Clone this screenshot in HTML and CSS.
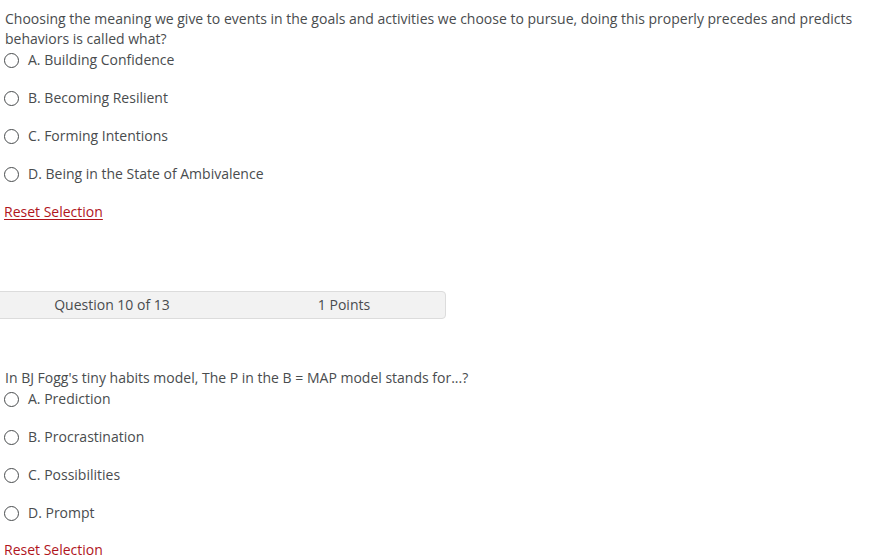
FILE: index.html
```html
<!DOCTYPE html>
<html>
<head>
<meta charset="utf-8">
<link rel="stylesheet" href="styles.css">
</head>
<body>
<div class="quiz">
  <section class="question q-first">
    <p class="prompt">Choosing the meaning we give to events in the goals and activities we choose to pursue, doing this properly precedes and predicts behaviors is called what?</p>
    <ul class="options">
      <li class="option"><span class="radio"></span><span class="label">A. Building Confidence</span></li>
      <li class="option"><span class="radio"></span><span class="label">B. Becoming Resilient</span></li>
      <li class="option"><span class="radio"></span><span class="label">C. Forming Intentions</span></li>
      <li class="option"><span class="radio"></span><span class="label">D. Being in the State of Ambivalence</span></li>
    </ul>
    <a class="reset" href="#">Reset Selection</a>
  </section>

  <div class="qheader">
    <div class="qnum">Question 10 of 13</div>
    <div class="qpts">1 Points</div>
  </div>

  <section class="question q-second">
    <p class="prompt">In BJ Fogg's tiny habits model, The P in the B = MAP model stands for...?</p>
    <ul class="options">
      <li class="option"><span class="radio"></span><span class="label">A. Prediction</span></li>
      <li class="option"><span class="radio"></span><span class="label">B. Procrastination</span></li>
      <li class="option"><span class="radio"></span><span class="label">C. Possibilities</span></li>
      <li class="option"><span class="radio"></span><span class="label">D. Prompt</span></li>
    </ul>
    <a class="reset reset-plain" href="#">Reset Selection</a>
  </section>
</div>
</body>
</html>
```
FILE: styles.css
```css
html, body {
  margin: 0;
  padding: 0;
  background: #ffffff;
  overflow: hidden;
}
body {
  font-family: "Open Sans", "Liberation Sans", sans-serif;
  font-size: 14px;
  line-height: 20px;
  color: #494c4e;
}
.quiz {
  padding-left: 4px;
  width: 860px;
}
.question {
  display: flex;
  flex-direction: column;
}
.q-first {
  padding-top: 9px;
}
.prompt {
  margin: 0;
  padding-left: 1px;
}
.options {
  list-style: none;
  margin: 1px 0 0 0;
  padding: 0;
  display: flex;
  flex-direction: column;
  gap: 18px;
}
.option {
  display: flex;
  align-items: center;
  height: 20px;
}
.radio {
  width: 15px;
  height: 15px;
  box-sizing: border-box;
  border: 1.5px solid #494c4e;
  border-radius: 50%;
  margin-right: 9px;
  flex: none;
}
.reset {
  align-self: flex-start;
  margin-top: 18px;
  color: #b0151d;
  text-decoration: underline;
  text-underline-offset: 2px;
}
.reset-plain {
  margin-top: 17px;
  text-decoration: none;
}
.qheader {
  display: flex;
  margin-top: 69px;
  margin-left: -14px;
  width: 456px;
  height: 28px;
  box-sizing: border-box;
  background: #f2f2f2;
  border: 1px solid #dcdcdc;
  border-radius: 4px;
  align-items: center;
}
.qnum {
  width: 242px;
  text-align: center;
}
.qpts {
  flex: 1;
  text-align: center;
  padding-left: 10px;
}
.q-second {
  margin-top: 49px;
}
```
